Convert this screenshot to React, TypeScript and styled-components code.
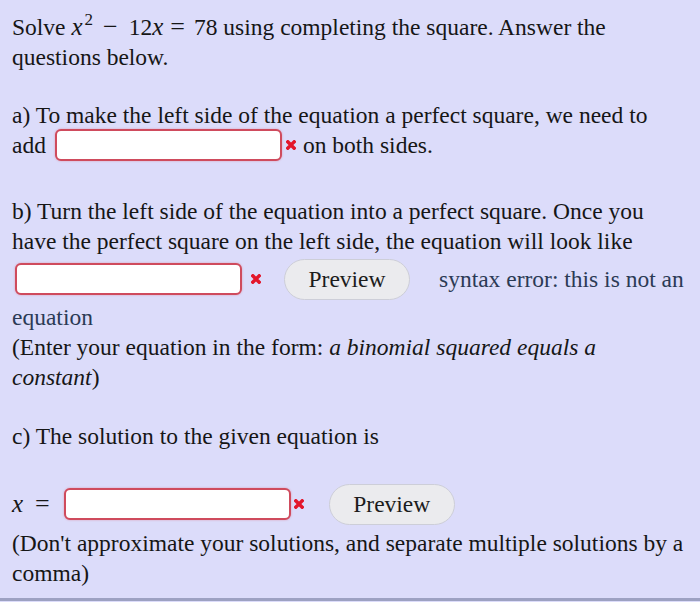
import styled, { createGlobalStyle } from "styled-components";

const serif = `"Liberation Serif", "Times New Roman", Times, serif`;

const GlobalStyle = createGlobalStyle`
  html, body {
    margin: 0;
    padding: 0;
    background: #dcdcfa;
  }
`;

const Page = styled.div`
  box-sizing: border-box;
  min-height: 601px;
  padding: 12px 0 0 12px;
  border-bottom: 3px solid #9da1c2;
  font-family: ${serif};
  font-size: 23.5px;
  line-height: 30px;
  color: #161616;
`;

const Block = styled.div<{ $gap?: number }>`
  margin-top: ${(p) => p.$gap ?? 0}px;
`;

const Line = styled.div<{ $error?: boolean }>`
  white-space: nowrap;
  color: ${(p) => (p.$error ? "#2b3a55" : "inherit")};
`;

const Row = styled.div<{ $gap?: number; $height?: number }>`
  display: flex;
  align-items: center;
  height: ${(p) => p.$height ?? 46}px;
  margin-top: ${(p) => p.$gap ?? 0}px;
  white-space: nowrap;
`;

const InlineRow = styled.div`
  display: flex;
  align-items: center;
  height: 30px;
  white-space: nowrap;
`;

const Var = styled.span`
  font-style: italic;
  font-size: 25px;
`;

const Op = styled.span<{ $l?: number; $r?: number }>`
  font-size: 26px;
  margin-left: ${(p) => p.$l ?? 8}px;
  margin-right: ${(p) => p.$r ?? 8}px;
`;

const Sup = styled.sup`
  font-size: 17px;
  line-height: 0;
  vertical-align: 10px;
  margin-left: 2px;
`;

const Answer = styled.input<{ $left?: number }>`
  box-sizing: border-box;
  flex: none;
  width: 227px;
  height: 32px;
  margin-left: ${(p) => p.$left ?? 0}px;
  border: 2px solid #cf4b5d;
  border-radius: 6px;
  background: #fff;
  box-shadow: 0 0 2px rgba(220, 60, 80, 0.45);
  font: inherit;
  outline: none;
`;

const Mark = styled.svg<{ $left?: number; $right?: number }>`
  flex: none;
  width: 10px;
  height: 10px;
  margin-left: ${(p) => p.$left ?? 4}px;
  margin-right: ${(p) => p.$right ?? 0}px;
`;

const PreviewButton = styled.button`
  box-sizing: border-box;
  flex: none;
  width: 126px;
  height: 41px;
  border: 1.5px solid #cdced8;
  border-radius: 21px;
  background: #ebebee;
  font-family: ${serif};
  font-size: 23.5px;
  color: #1c1c1c;
  padding: 0;
`;

const ErrorText = styled.span`
  margin-left: 29px;
  color: #2b3a55;
`;

const Em = styled.i`
  font-style: italic;
`;

function Cross(props: { left?: number; right?: number }) {
  return (
    <Mark $left={props.left} $right={props.right} viewBox="0 0 10 10">
      <path
        d="M1.8 1.8 L8.2 8.2 M8.2 1.8 L1.8 8.2"
        stroke="#e3162b"
        strokeWidth="3.4"
        strokeLinecap="square"
      />
    </Mark>
  );
}

export default function App() {
  return (
    <>
      <GlobalStyle />
      <Page>
        <Block>
          <Line>
            Solve <Var>x</Var>
            <Sup>2</Sup>
            <Op $l={10} $r={11}>−</Op>12<Var>x</Var>
            <Op $l={7} $r={9}>=</Op>78 using completing the square. Answer the
          </Line>
          <Line>questions below.</Line>
        </Block>

        <Block $gap={28}>
          <Line>a) To make the left side of the equation a perfect square, we need to</Line>
          <InlineRow>
            add
            <Answer $left={9} />
            <Cross left={4} right={7} />
            on both sides.
          </InlineRow>
        </Block>

        <Block $gap={36}>
          <Line>b) Turn the left side of the equation into a perfect square. Once you</Line>
          <Line>have the perfect square on the left side, the equation will look like</Line>
          <Row>
            <Answer $left={3} />
            <Cross left={9} right={23} />
            <PreviewButton>Preview</PreviewButton>
            <ErrorText>syntax error: this is not an</ErrorText>
          </Row>
          <Line $error>equation</Line>
          <Line>
            (Enter your equation in the form: <Em>a binomial squared equals a</Em>
          </Line>
          <Line>
            <Em>constant</Em>)
          </Line>
        </Block>

        <Block $gap={29}>
          <Line>c) The solution to the given equation is</Line>
          <Row $gap={29} $height={48}>
            <Var>x</Var>
            <Op $l={12} $r={14}>=</Op>
            <Answer />
            <Cross left={3} right={25} />
            <PreviewButton>Preview</PreviewButton>
          </Row>
          <Line>(Don't approximate your solutions, and separate multiple solutions by a</Line>
          <Line>comma)</Line>
        </Block>
      </Page>
    </>
  );
}
